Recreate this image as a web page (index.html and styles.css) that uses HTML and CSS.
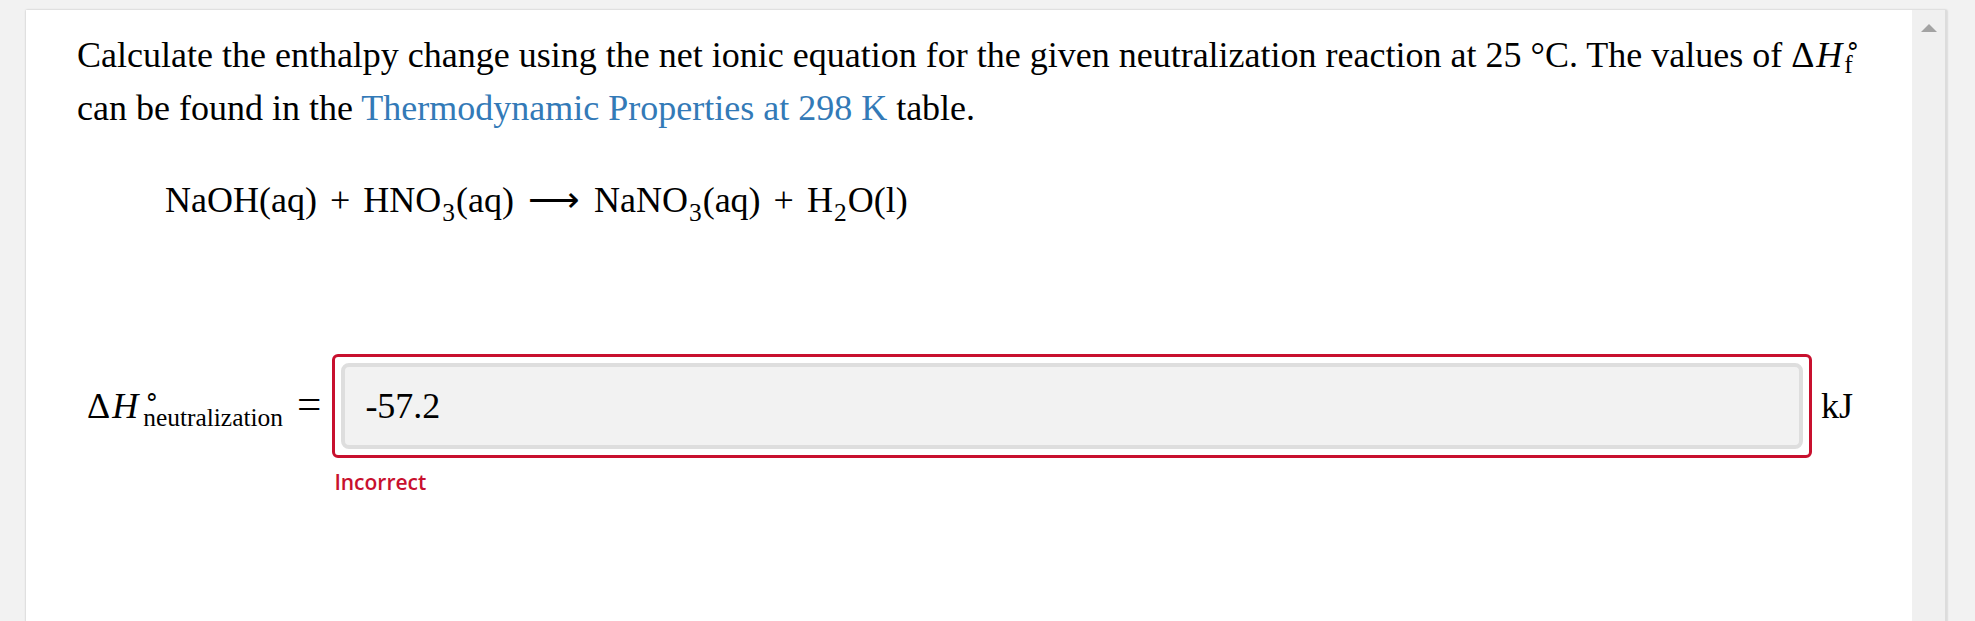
FILE: index.html
```html
<!DOCTYPE html>
<html>
<head>
<meta charset="utf-8">
<title>Enthalpy of neutralization</title>
<link rel="stylesheet" href="styles.css">
</head>
<body>
<div class="page">
  <div class="card">
    <div class="content">
      <p class="question">Calculate the enthalpy change using the net ionic equation for the given neutralization reaction at 25&nbsp;°C. The values of <span class="math"><span class="mo">Δ</span><span class="mi">H</span><span class="deg">∘</span><span class="msub">f</span></span> can be found in the <a class="link" href="#">Thermodynamic Properties at 298 K</a> table.</p>
      <div class="equation">NaOH(aq)<span class="op">+</span>HNO<span class="chem-sub">3</span>(aq)<span class="arrow">⟶</span>NaNO<span class="chem-sub">3</span>(aq)<span class="op">+</span>H<span class="chem-sub">2</span>O(l)</div>
      <div class="answer-row">
        <div class="label"><span class="mo">Δ</span><span class="mi">H</span><span class="deg deg-lbl">∘</span><span class="msub msub-lbl">neutralization</span><span class="eq">=</span></div>
        <div class="answer-box"><div class="answer-input">-57.2</div></div>
        <div class="unit">kJ</div>
        <div class="feedback">Incorrect</div>
      </div>
    </div>
    <div class="scrollbar"><span class="scroll-up"></span></div>
  </div>
</div>
</body>
</html>
```

FILE: styles.css
```css
html, body {
  margin: 0;
  padding: 0;
}
body {
  background: #f2f2f2;
  overflow: hidden;
  font-family: "Liberation Serif", "Times New Roman", serif;
  color: #000;
}
.page {
  padding: 10px 28px 0 26px;
}
.card {
  display: flex;
  height: 660px;
  background: #fff;
  box-shadow: 0 0 2px rgba(0, 0, 0, 0.22);
}
.content {
  flex: 1;
  padding: 19px 51px 0 51px;
}
.scrollbar {
  width: 33px;
  background: #f0f0f0;
  border-right: 2px solid #dcdcdc;
  display: flex;
  justify-content: center;
  padding-top: 14px;
  box-sizing: content-box;
}
.scroll-up {
  width: 0;
  height: 0;
  border-left: 8px solid transparent;
  border-right: 8px solid transparent;
  border-bottom: 8px solid #a3a3a3;
}
.question {
  margin: 0;
  font-size: 36px;
  line-height: 53px;
}
.link {
  color: #337ab7;
  text-decoration: none;
}
.mo {
  margin-right: 2px;
}
.mi {
  font-style: italic;
}
.deg {
  display: inline-block;
  width: 0;
  font-size: 0.707em;
  line-height: 1;
  vertical-align: 0.55em;
  margin-left: 3px;
}
.msub {
  font-size: 0.707em;
  line-height: 0;
  vertical-align: -0.25em;
  margin-left: -1px;
}
.equation {
  margin: 39px 0 0 88px;
  font-size: 36px;
  line-height: 53px;
  white-space: nowrap;
}
.chem-sub {
  font-size: 0.707em;
  line-height: 0;
  vertical-align: -0.36em;
  margin: 0 1px;
}
.op {
  margin: 0 13px;
}
.arrow {
  margin: 0 14px;
}
.answer-row {
  margin: 127px 8px 0 10px;
  display: grid;
  grid-template-columns: auto 1fr auto;
  align-items: baseline;
}
.label {
  font-size: 36px;
  line-height: 53px;
  white-space: nowrap;
  margin-right: 11px;
}
.deg-lbl {
  margin-left: 6px;
}
.msub-lbl {
  vertical-align: -0.3em;
  margin-left: -1px;
}
.eq {
  display: inline-block;
  margin-left: 14px;
  font-size: 1.2em;
  line-height: 1;
}
.answer-box {
  border: 3px solid #c8102e;
  border-radius: 6px;
  padding: 6px;
}
.answer-input {
  border: 4px solid #dedede;
  border-radius: 8px;
  background: #f2f2f2;
  height: 78px;
  line-height: 78px;
  padding: 0 20px;
  font-size: 36px;
}
.unit {
  font-size: 36px;
  margin-left: 9px;
}
.feedback {
  grid-column: 2;
  font-family: "Open Sans", "Noto Sans", sans-serif;
  font-weight: 600;
  font-size: 21px;
  line-height: 30px;
  color: #c8102e;
  margin-top: 9px;
  padding-left: 2px;
}
```
